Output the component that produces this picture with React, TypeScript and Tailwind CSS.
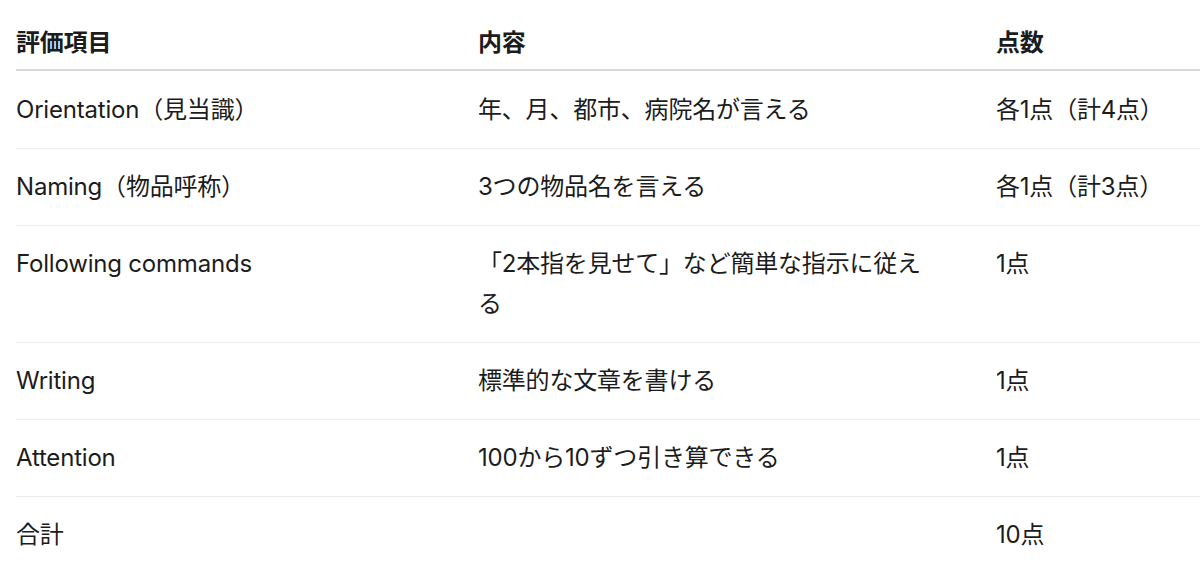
import React from "react";

const rows: [string, string, string][] = [
  ["Orientation（見当識）", "年、月、都市、病院名が言える", "各1点（計4点）"],
  ["Naming（物品呼称）", "3つの物品名を言える", "各1点（計3点）"],
  ["Following commands", "「2本指を見せて」など簡単な指示に従える", "1点"],
  ["Writing", "標準的な文章を書ける", "1点"],
  ["Attention", "100から10ずつ引き算できる", "1点"],
  ["合計", "", "10点"],
];

export default function App() {
  return (
    <div
      className="w-[1200px] h-[578px] overflow-hidden bg-white text-[#1c1c1c]"
      style={{ fontFamily: '"Inter", "Noto Sans CJK JP", sans-serif' }}
    >
      <table className="ml-[16px] w-[1200px] table-fixed border-collapse text-[24px] leading-[40px] tracking-[-0.2px]">
        <colgroup>
          <col className="w-[462px]" />
          <col className="w-[518px]" />
          <col />
        </colgroup>
        <thead>
          <tr className="border-b-2 border-[#d9d9d9]">
            <th className="pt-[23px] pb-[6px] text-left font-bold align-top">評価項目</th>
            <th className="pt-[23px] pb-[6px] text-left font-bold align-top">内容</th>
            <th className="pt-[23px] pb-[6px] text-left font-bold align-top">点数</th>
          </tr>
        </thead>
        <tbody>
          {rows.map((r, i) => {
            const pad = i === 0 ? "pt-[19px] pb-[18px]" : "pt-[18px] pb-[18px]";
            return (
              <tr key={i} className={i < rows.length - 1 ? "border-b border-[#ececec]" : ""}>
                <td className={`${pad} align-top pr-[16px]`}>{r[0]}</td>
                <td className={`${pad} align-top pr-[64px]`}>{r[1]}</td>
                <td className={`${pad} align-top`}>{r[2]}</td>
              </tr>
            );
          })}
        </tbody>
      </table>
    </div>
  );
}
